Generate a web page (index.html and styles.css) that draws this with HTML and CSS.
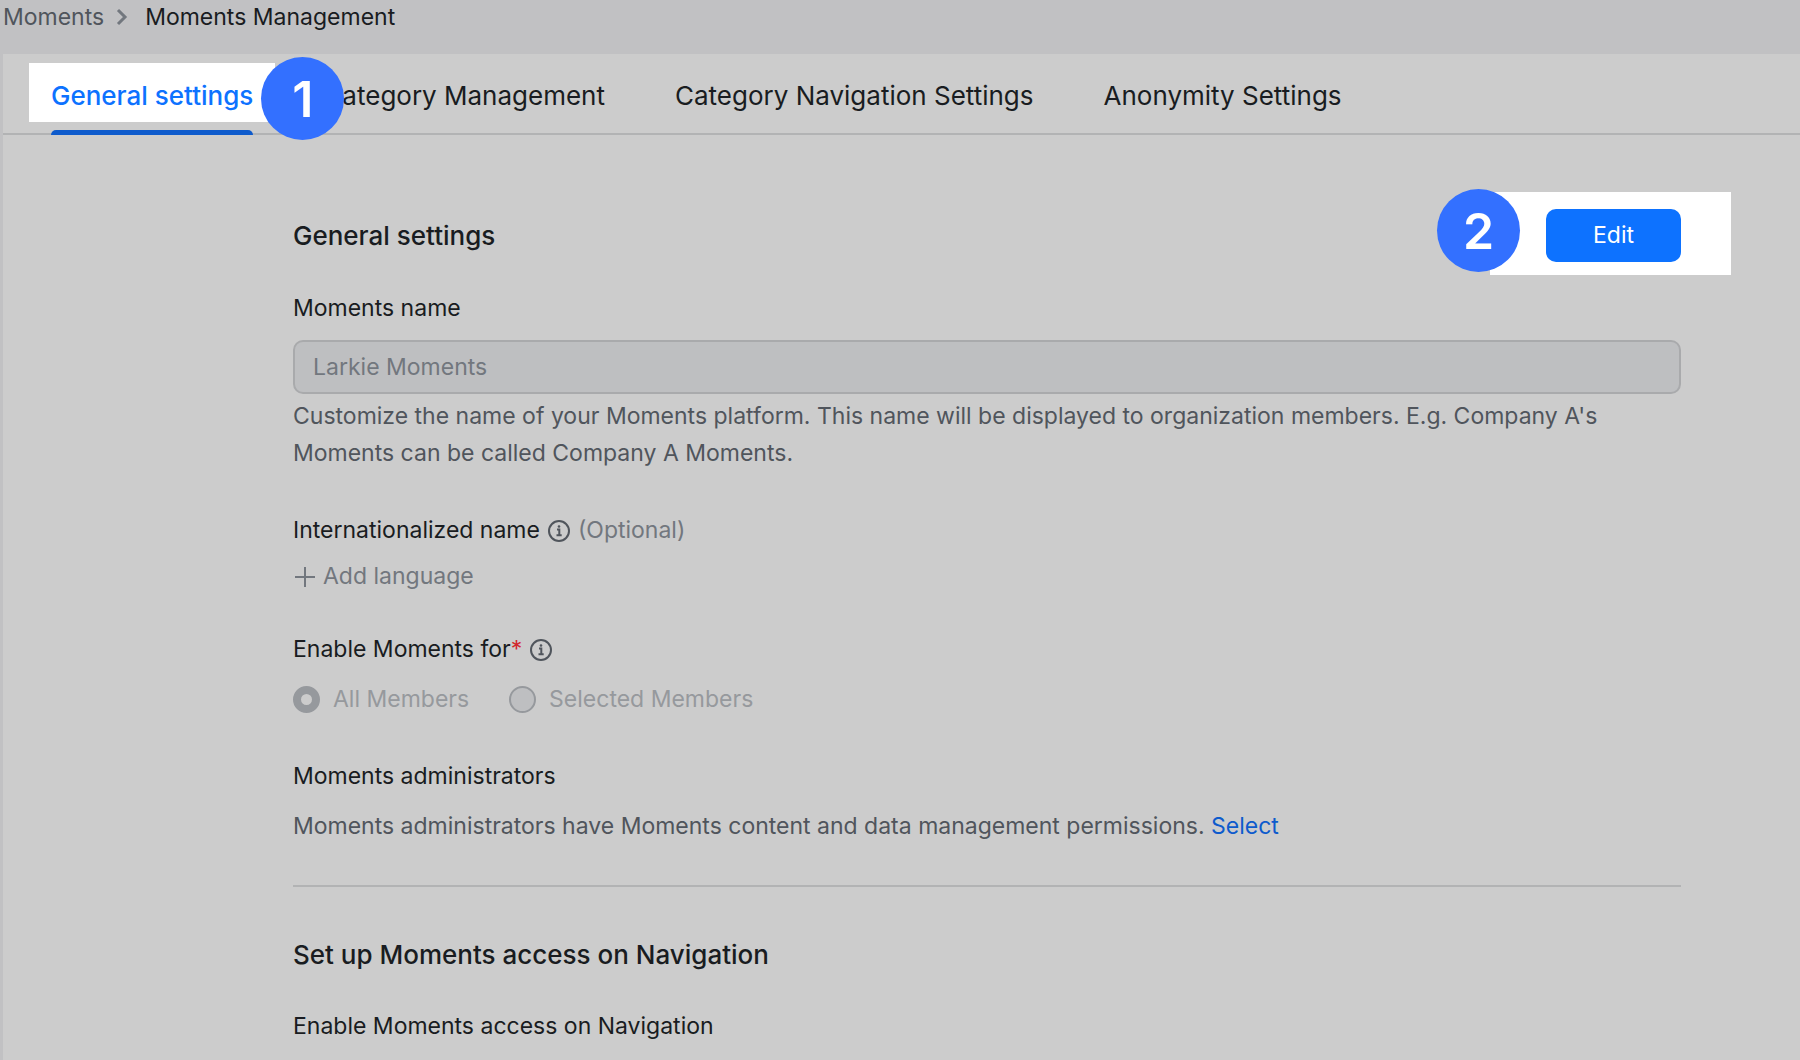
FILE: index.html
```html
<!DOCTYPE html>
<html lang="en">
<head>
  <meta charset="UTF-8">
  <meta name="viewport" content="width=device-width, initial-scale=1.0">
  <title>Moments Management</title>
  <link rel="stylesheet" href="styles.css">
</head>
<body>
  <nav class="breadcrumb" aria-label="Breadcrumb">
    <a href="#moments">Moments</a>
    <svg class="chevron" viewBox="0 0 12 18" aria-hidden="true"><path d="M2 2l7 7-7 7"/></svg>
    <span class="current">Moments Management</span>
  </nav>

  <main class="panel">
    <nav class="tabs">
      <a class="tab active" href="#general"><span class="tab-text">General settings</span><span class="step step-one">1</span></a>
      <a class="tab" href="#category">Category Management</a>
      <a class="tab" href="#navigation">Category Navigation Settings</a>
      <a class="tab" href="#anonymity">Anonymity Settings</a>
    </nav>

    <form class="content">
      <section class="section">
        <div class="section-head">
          <h2>General settings</h2>
          <div class="edit-wrap">
            <span class="step step-two">2</span>
            <button class="edit-btn" type="button">Edit</button>
          </div>
        </div>

        <div class="field">
          <label for="moments-name">Moments name</label>
          <input class="text-input" id="moments-name" type="text" value="Larkie Moments" disabled>
          <p class="help">Customize the name of your Moments platform. This name will be displayed to organization members. E.g. Company A's Moments can be called Company A Moments.</p>
        </div>

        <div class="field">
          <div class="label-row">
            <span>Internationalized name</span>
            <svg class="info" viewBox="0 0 22 22" aria-hidden="true"><circle cx="11" cy="11" r="10"/><path d="M9 9.500h2.300v5.500M8.500 15.200h5.200"/><circle class="dot" cx="11" cy="6.500" r="1.300"/></svg>
            <span class="optional">(Optional)</span>
          </div>
          <button class="add-btn" type="button" disabled>
            <svg class="plus" viewBox="0 0 20 20" aria-hidden="true"><path d="M10 0v20M0 10h20"/></svg>
            Add language
          </button>
        </div>

        <div class="field">
          <div class="label-row">
            <span>Enable Moments for<span class="required">*</span></span>
            <svg class="info" viewBox="0 0 22 22" aria-hidden="true"><circle cx="11" cy="11" r="10"/><path d="M9 9.500h2.300v5.500M8.500 15.200h5.200"/><circle class="dot" cx="11" cy="6.500" r="1.300"/></svg>
          </div>
          <div class="radios">
            <label class="radio"><input type="radio" name="scope" checked disabled>All Members</label>
            <label class="radio"><input type="radio" name="scope" disabled>Selected Members</label>
          </div>
        </div>

        <div class="field">
          <div class="label-row">Moments administrators</div>
          <p class="desc">Moments administrators have Moments content and data management permissions. <a href="#select">Select</a></p>
        </div>
      </section>

      <section class="section">
        <h2>Set up Moments access on Navigation</h2>
        <div class="field">
          <div class="label-row">Enable Moments access on Navigation</div>
        </div>
      </section>
    </form>
  </main>
</body>
</html>
```
FILE: styles.css
```css
* {
  box-sizing: border-box;
}
body {
  margin: 0;
  background: #c1c1c3;
  color: #191c21;
  font-family: Inter, "Liberation Sans", sans-serif;
  font-size: 23px;
  line-height: 37px;
}
a {
  color: inherit;
  text-decoration: none;
}
h2, p {
  margin: 0;
}
h2 {
  font-size: 26px;
  font-weight: 500;
  line-height: 40px;
}
button, input {
  font: inherit;
}

/* breadcrumb */
.breadcrumb {
  display: flex;
  align-items: center;
  height: 54px;
  padding: 0 3px 20px;
  color: #50555c;
}
.chevron {
  width: 12px;
  height: 18px;
  margin: 0 17px 0 12px;
  fill: none;
  stroke: #72777e;
  stroke-width: 3;
}
.current {
  color: #191c21;
}

/* tabs */
.panel {
  min-height: calc(100vh - 54px);
  margin-left: 3px;
  background: #ccc;
}
.tabs {
  display: flex;
  gap: 70px;
  height: 81px;
  padding: 0 48px;
  border-bottom: 2px solid #b2b3b4;
  font-size: 26px;
  line-height: 83px;
  white-space: nowrap;
}
.tab {
  position: relative;
  height: 81px;
}
.active {
  color: #0d72ff;
  font-weight: 500;
  z-index: 1;
}
.active::before {
  content: "";
  position: absolute;
  inset: 9px -22px 13px;
  background: #fff;
}
.active::after {
  content: "";
  position: absolute;
  left: 0;
  right: 0;
  bottom: 0;
  height: 5px;
  border-radius: 5px 5px 0 0;
  background: #0e5bcc;
}
.tab-text {
  position: relative;
}

/* step markers */
.step {
  position: absolute;
  z-index: 2;
  width: 83px;
  height: 83px;
  border-radius: 50%;
  background: #3370ff;
  color: #fff;
  font-size: 50px;
  font-weight: 600;
  line-height: 85px;
  text-align: center;
}
.step-one {
  top: 3px;
  left: calc(100% + 8px);
}
.step-two {
  top: -3px;
  left: -53px;
}

/* content */
.content {
  padding: 57px 119px 0 290px;
}
.section + .section {
  margin-top: 40px;
  padding-top: 48px;
  border-top: 2px solid #b2b3b4;
}
.section-head {
  display: flex;
  align-items: flex-end;
  justify-content: space-between;
  height: 83px;
  margin-right: -50px;
}
.section-head h2 {
  padding-bottom: 19px;
}
.edit-wrap {
  position: relative;
  padding: 17px 50px 13px 56px;
  background: #fff;
}
.edit-btn {
  display: block;
  width: 135px;
  height: 53px;
  border: none;
  border-radius: 10px;
  background: #0d72ff;
  color: #fff;
}
.field + .field {
  margin-top: 40px;
}
.section-head + .field {
  margin-top: 15px;
}
h2 + .field {
  margin-top: 33px;
}
.label-row {
  display: flex;
  align-items: center;
  gap: 8px;
}
.text-input {
  display: block;
  width: 100%;
  height: 54px;
  margin: 13px 0 4px;
  padding: 0 18px;
  border: 2px solid #a9aaac;
  border-radius: 10px;
  background: #bebfc1;
  color: #72777e;
}
.help, .desc {
  color: #50555c;
}
.desc {
  margin-top: 13px;
}
.desc a {
  color: #0e5bcc;
}
.info {
  width: 22px;
  height: 22px;
  fill: none;
  stroke: #50555c;
  stroke-width: 2;
}
.info .dot {
  fill: #50555c;
  stroke: none;
}
.optional {
  color: #72777e;
}
.required {
  color: #d2282d;
}
.add-btn {
  display: flex;
  align-items: center;
  gap: 8px;
  margin-top: 13px;
  padding: 0 2px;
  border: none;
  background: none;
  color: #72777e;
  line-height: 29px;
}
.plus {
  width: 20px;
  height: 20px;
  stroke: #72777e;
  stroke-width: 2;
}
.radios {
  display: flex;
  gap: 40px;
  margin-top: 13px;
}
.radio {
  display: flex;
  align-items: center;
  gap: 13px;
  color: #96999d;
}
.radio input {
  appearance: none;
  width: 27px;
  height: 27px;
  margin: 0;
  border: 2px solid #96999d;
  border-radius: 50%;
  background: #bebfc1;
}
.radio input:checked {
  border-width: 8px;
  background: #ccc;
}
```
